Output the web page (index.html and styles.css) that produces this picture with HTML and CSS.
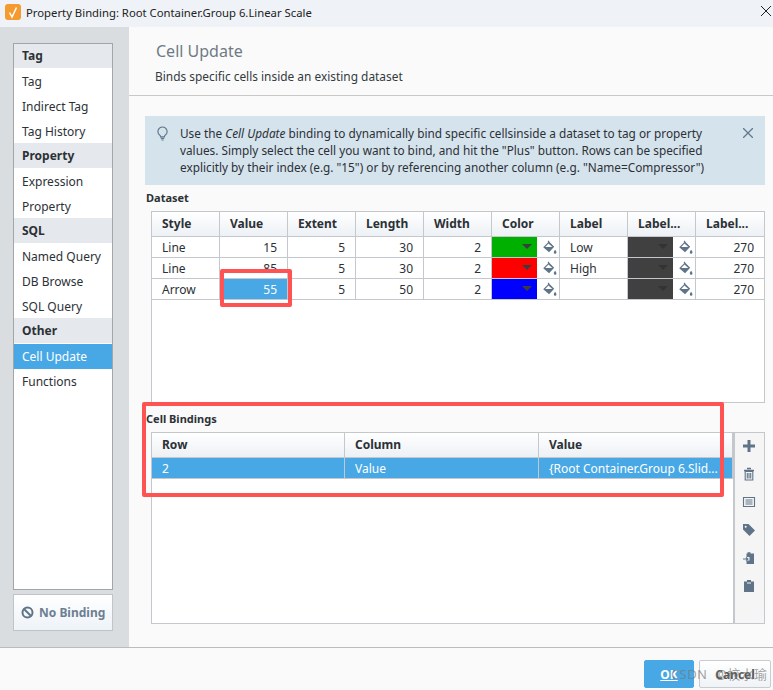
FILE: index.html
```html
<!DOCTYPE html>
<html lang="en">
<head>
<meta charset="utf-8">
<title>Property Binding</title>
<link rel="stylesheet" href="styles.css">
</head>
<body>
<svg class="defs" width="0" height="0">
  <symbol id="bucket" viewBox="0 0 16 16">
    <path d="M6 1.2 7.2 0.6 8 2.2 13 7.2 7.5 13 1.3 7.6 6.6 2.4Z" fill="#5f7488"/>
    <path d="M3.4 7.4 6.9 3.6 11 7.4Z" fill="#fff"/>
    <path d="M14 10.5c.9 1.3 1.4 2 1.4 2.7a1.4 1.4 0 0 1-2.8 0c0-.7.5-1.4 1.4-2.7Z" fill="#5f7488"/>
  </symbol>
</svg>
<div class="titlebar">
  <svg class="appicon" width="16" height="16" viewBox="0 0 16 16"><rect width="16" height="16" rx="3" fill="#f59a2e"/><path d="M4.500 8.500 7 13 11.500 3.500" fill="none" stroke="#fff" stroke-width="1.500"/></svg>
  <span class="titletext">Property Binding: Root Container.Group 6.Linear Scale</span>
  <svg class="winclose" width="10" height="10" viewBox="0 0 10 10"><path d="M0 0 10 10M10 0 0 10" stroke="#222" stroke-width="1"/></svg>
</div>
<div class="middle">
  <aside class="sidebar">
    <nav class="navlist">
      <div class="navhead">Tag</div>
      <div class="navitem">Tag</div>
      <div class="navitem">Indirect Tag</div>
      <div class="navitem">Tag History</div>
      <div class="navhead">Property</div>
      <div class="navitem">Expression</div>
      <div class="navitem">Property</div>
      <div class="navhead">SQL</div>
      <div class="navitem">Named Query</div>
      <div class="navitem">DB Browse</div>
      <div class="navitem">SQL Query</div>
      <div class="navhead">Other</div>
      <div class="navitem active">Cell Update</div>
      <div class="navitem">Functions</div>
    </nav>
    <div class="nobinding">
      <svg width="13" height="13" viewBox="0 0 13 13"><circle cx="6.500" cy="6.500" r="5" fill="none" stroke="#5f7488" stroke-width="2"/><path d="M3 3 10 10" stroke="#5f7488" stroke-width="2"/></svg>
      <span>No Binding</span>
    </div>
  </aside>
  <main class="content">
    <header class="pagehead">
      <h1>Cell Update</h1>
      <p>Binds specific cells inside an existing dataset</p>
    </header>
    <div class="body">
      <div class="info">
        <svg class="bulb" width="11" height="15" viewBox="0 0 11 15"><path d="M5.500 1a4.500 4.500 0 0 0-2.600 8.200c.5.4.7.9.7 1.600h3.800c0-.7.2-1.200.7-1.600A4.500 4.500 0 0 0 5.500 1Z" fill="none" stroke="#64788c" stroke-width="1.200"/><path d="M3.800 12.300h3.400M4.400 14h2.200" stroke="#64788c" stroke-width="1.200"/></svg>
        <p>Use the <i>Cell Update</i> binding to dynamically bind specific cellsinside a dataset to tag or property values. Simply select the cell you want to bind, and hit the "Plus" button. Rows can be specified explicitly by their index (e.g. "15") or by referencing another column (e.g. "Name=Compressor")</p>
        <svg class="infoclose" width="10" height="10" viewBox="0 0 10 10"><path d="M0 0 10 10M10 0 0 10" stroke="#64788c" stroke-width="1.300"/></svg>
      </div>
      <div class="seclabel first">Dataset</div>
      <div class="dataset">
        <div class="row head">
          <div class="cell">Style</div><div class="cell">Value</div><div class="cell">Extent</div><div class="cell">Length</div><div class="cell">Width</div><div class="cell">Color</div><div class="cell">Label</div><div class="cell">Label...</div><div class="cell">Label...</div>
        </div>
        <div class="row">
          <div class="cell">Line</div><div class="cell num">15</div><div class="cell num">5</div><div class="cell num">30</div><div class="cell num">2</div>
          <div class="cell swatchcell"><span class="swatch green"><i></i></span><svg class="fill"><use href="#bucket"/></svg></div>
          <div class="cell">Low</div>
          <div class="cell swatchcell"><span class="swatch dark"><i></i></span><svg class="fill"><use href="#bucket"/></svg></div>
          <div class="cell num">270</div>
        </div>
        <div class="row">
          <div class="cell">Line</div><div class="cell num">85</div><div class="cell num">5</div><div class="cell num">30</div><div class="cell num">2</div>
          <div class="cell swatchcell"><span class="swatch red"><i></i></span><svg class="fill"><use href="#bucket"/></svg></div>
          <div class="cell">High</div>
          <div class="cell swatchcell"><span class="swatch dark"><i></i></span><svg class="fill"><use href="#bucket"/></svg></div>
          <div class="cell num">270</div>
        </div>
        <div class="row">
          <div class="cell">Arrow</div><div class="cell num selected">55</div><div class="cell num">5</div><div class="cell num">50</div><div class="cell num">2</div>
          <div class="cell swatchcell"><span class="swatch blue"><i></i></span><svg class="fill"><use href="#bucket"/></svg></div>
          <div class="cell"></div>
          <div class="cell swatchcell"><span class="swatch dark"><i></i></span><svg class="fill"><use href="#bucket"/></svg></div>
          <div class="cell num">270</div>
        </div>
      </div>
      <div class="seclabel second">Cell Bindings</div>
      <div class="bindings">
        <div class="bindtable">
          <div class="row head">
            <div class="cell">Row</div><div class="cell">Column</div><div class="cell">Value</div>
          </div>
          <div class="row picked">
            <div class="cell">2</div><div class="cell">Value</div><div class="cell">{Root Container.Group 6.Slid...</div>
          </div>
        </div>
        <div class="toolbar">
          <svg viewBox="0 0 14 14"><path d="M5.500 1h3v4.500H13v3H8.500V13h-3V8.500H1v-3h4.500Z" fill="#5f7488"/></svg>
          <svg viewBox="0 0 14 14"><path d="M5 1.500h4M2 3.500h10" stroke="#5f7488" stroke-width="1.300" fill="none"/><path d="M3.200 4.500h7.600V13H3.200Z M5.300 6v5.500M7 6v5.500M8.700 6v5.500" stroke="#5f7488" stroke-width="1.100" fill="none"/></svg>
          <svg viewBox="0 0 14 14"><path d="M1.500 2.500h11v9h-11Z" fill="none" stroke="#5f7488" stroke-width="1.100"/><path d="M3.500 5h7M3.500 7h7M3.500 9h7" stroke="#5f7488" stroke-width="1.100"/></svg>
          <svg viewBox="0 0 14 14"><path d="M1 1h5.500L13 7.500 7.500 13 1 6.500Z" fill="#5f7488"/><circle cx="3.700" cy="3.700" r="1" fill="#f5f5f5"/></svg>
          <svg viewBox="0 0 14 14"><path d="M5.500 2.500V1.200h3v1.300H12V13H4.500V9.500h3V6h-3V2.500Z" fill="#5f7488"/><path d="M1 8h4.500M4 6.300 6 8 4 9.700" fill="none" stroke="#5f7488" stroke-width="1.100"/></svg>
          <svg viewBox="0 0 14 14"><path d="M5 2.500V1h4v1.500h3V13H2V2.500Z" fill="#5f7488"/><path d="M5 4h4" stroke="#f5f5f5" stroke-width="1"/></svg>
        </div>
      </div>
    </div>
  </main>
</div>
<footer class="footer">
  <button class="btn ok"><u>OK</u></button>
  <button class="btn cancel">Cancel</button>
</footer>
<div class="mark mark1"></div>
<div class="mark mark2"></div>
<div class="watermark">CSDN @校水瑜</div>
</body>
</html>
```
FILE: styles.css
```css
* { box-sizing: border-box; }
html, body { margin: 0; height: 100%; }
body {
  position: relative;
  width: 773px;
  height: 690px;
  overflow: hidden;
  display: flex;
  flex-direction: column;
  background: #fafafa;
  color: #2c3136;
  font: 12px/17px "Noto Sans", "Open Sans", sans-serif;
}
.defs { position: absolute; }

.titlebar {
  flex: none;
  height: 27px;
  padding: 0 2px 0 5px;
  display: flex;
  align-items: center;
  background: #eff3f8;
  color: #222;
}
.appicon { margin-top: -3px; }
.titletext { margin-left: 5px; flex: 1; margin-top: -3px; font-size: 11.300px; }
.winclose { margin-top: -5px; }

.middle { flex: 1; display: flex; min-height: 0; }

.sidebar {
  flex: none;
  width: 129px;
  padding: 16px 16px 16px 13px;
  background: #d9dde0;
  display: flex;
  flex-direction: column;
  gap: 4px;
}
.navlist {
  flex: 1;
  background: #fff;
  border: 1px solid #a2a6aa;
}
.navhead {
  height: 25px;
  padding-left: 8px;
  line-height: 25px;
  font-weight: 700;
  background: #e5e8ec;
}
.navhead:first-child { height: 24px; line-height: 23px; }
.navitem { height: 25px; padding-left: 8px; line-height: 27px; }
.navitem.active {
  height: 26px;
  line-height: 25px;
  border-top: 1px solid #fff;
  background: #47a8e5;
  color: #fff;
}
.navitem.active + .navitem { line-height: 25px; }
.nobinding {
  flex: none;
  height: 37px;
  padding-left: 7px;
  display: flex;
  align-items: center;
  gap: 5px;
  border: 1px solid #c0c4c8;
  background: linear-gradient(#fff, #eef3f8);
  color: #6c7f92;
  font-weight: 700;
}

.content { flex: 1; min-width: 0; display: flex; flex-direction: column; }
.pagehead {
  flex: none;
  height: 69px;
  padding: 13px 0 0 26px;
  border-bottom: 1px solid #c8c8c8;
}
.pagehead h1 {
  margin: 0 0 0 1px;
  font-size: 16px;
  line-height: 22px;
  font-weight: 400;
  color: #6f7a85;
}
.pagehead p { margin: 6px 0 0; font-size: 11.900px; color: #333a40; }

.body { flex: 1; padding: 20px 8px 23px 16px; display: flex; flex-direction: column; }

.info {
  flex: none;
  height: 69px;
  padding: 9px 12px 0 35px;
  display: flex;
  position: relative;
  background: #d5e3ed;
}
.info p { margin: 0; width: 545px; font-size: 11.800px; }
.bulb { position: absolute; left: 12px; top: 10px; }
.infoclose { position: absolute; right: 12px; top: 12px; }

.seclabel { flex: none; margin-left: 1px; font-size: 11px; font-weight: 700; line-height: 14px; }
.seclabel.first { margin-top: 6px; }
.seclabel.second { margin-top: 9px; }

.dataset {
  flex: none;
  height: 192px;
  margin: 6px 0 0 6px;
  border: 1px solid #c4c8cc;
  background: #fff;
}
.row { display: grid; height: 21px; border-bottom: 1px solid #c4c8cc; }
.row.head { height: 25px; background: linear-gradient(#fff, #edf1f5); font-weight: 700; }
.dataset .row { grid-template-columns: 68px 68px 68px 68px 68px 68px 68px 68px 1fr; }
.cell {
  padding: 0 10px;
  line-height: 21px;
  white-space: nowrap;
  overflow: hidden;
  border-right: 1px solid #c4c8cc;
}
.row .cell:last-child { border-right: 0; }
.row.head .cell { line-height: 23px; }
.num { text-align: right; }
.selected { background: #47a8e5; color: #fff; }

.swatchcell { padding: 0; display: flex; align-items: center; }
.swatch { position: relative; width: 45px; height: 20px; flex: none; }
.swatch i {
  position: absolute;
  right: 5px;
  top: 7px;
  border: 5px solid transparent;
  border-top-color: #3c3c3c;
  border-bottom: 0;
}
.green { background: #00b000; }
.red { background: #f00; }
.blue { background: #00f; }
.dark { background: #404040; }
.dark i { border-top-color: #333; }
.fill { width: 15px; height: 15px; margin-left: 5px; }

.bindings {
  flex: 1;
  min-height: 0;
  margin: 6px 0 0 6px;
  display: flex;
}
.bindtable {
  flex: none;
  width: 582px;
  border: 1px solid #c4c8cc;
  border-right: 0;
  background: #fff;
}
.bindtable .row { grid-template-columns: 193px 194px 1fr; }
.picked { background: #47a8e5; color: #fff; }
.bindtable .row .cell:last-child { border-right: 1px solid #c4c8cc; }
.toolbar {
  flex: 1;
  padding: 6px 1px 0 0;
  display: flex;
  flex-direction: column;
  align-items: center;
  gap: 14px;
  border: 1px solid #c4c8cc;
  border-left-width: 2px;
  background: #f5f5f5;
}
.toolbar svg { flex: none; width: 14px; height: 14px; }

.footer {
  flex: none;
  height: 43px;
  padding: 12px 2px 2px 0;
  display: flex;
  justify-content: flex-end;
  gap: 5px;
  border-top: 1px solid #bcbcbc;
  background: #fafafa;
}
.btn {
  font: 700 12px/17px "Noto Sans", "Open Sans", sans-serif;
  padding: 0;
  border-radius: 2px;
}
.btn.ok { width: 50px; border: 1px solid #47a8e5; background: #47a8e5; color: #fff; }
.btn.cancel { width: 72px; border: 1px solid #c8ccd0; background: linear-gradient(#fff, #f0f3f6); color: #555; }

.mark { position: absolute; border: 4px solid #ff5252; border-radius: 2px; pointer-events: none; }
.mark1 { left: 220px; top: 269px; width: 72px; height: 38px; }
.mark2 { left: 142px; top: 402px; width: 582px; height: 95px; }
.watermark {
  position: absolute;
  left: 671px;
  top: 666px;
  font-size: 13px;
  word-spacing: 4px;
  letter-spacing: .4px;
  color: rgba(120, 120, 120, .7);
  white-space: nowrap;
  font-family: "Noto Sans", "Noto Sans CJK SC", sans-serif;
}
```
